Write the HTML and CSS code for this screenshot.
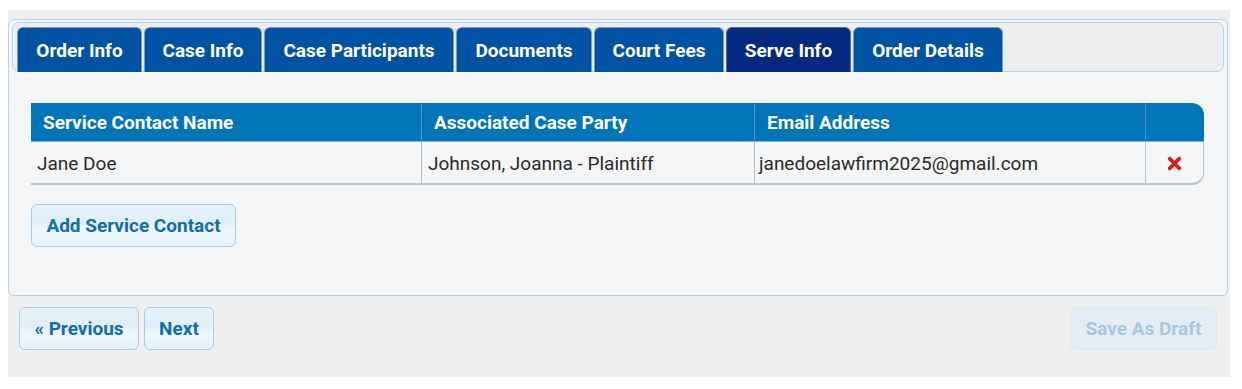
FILE: index.html
```html
<!DOCTYPE html>
<html>
<head>
<meta charset="utf-8">
<link rel="stylesheet" href="styles.css">
</head>
<body>
<div class="page">
  <div class="panel">
    <ul class="tabs">
      <li class="tab t1">Order Info</li>
      <li class="tab t2">Case Info</li>
      <li class="tab t3">Case Participants</li>
      <li class="tab t4">Documents</li>
      <li class="tab t5">Court Fees</li>
      <li class="tab t6 active">Serve Info</li>
      <li class="tab t7">Order Details</li>
    </ul>
    <div class="content">
      <table class="grid">
        <thead>
          <tr>
            <th class="c1">Service Contact Name</th>
            <th class="c2">Associated Case Party</th>
            <th class="c3">Email Address</th>
            <th class="c4"></th>
          </tr>
        </thead>
        <tbody>
          <tr>
            <td class="c1">Jane Doe</td>
            <td class="c2">Johnson, Joanna - Plaintiff</td>
            <td class="c3">janedoelawfirm2025@gmail.com</td>
            <td class="c4"><svg class="del" width="17" height="17" viewBox="0 0 16 16"><path d="M3.5 3.5 L12.5 12.5 M12.5 3.5 L3.5 12.5" stroke="#d12424" stroke-width="3.6" stroke-linecap="round"/></svg></td>
          </tr>
        </tbody>
      </table>
      <button class="btn add">Add Service Contact</button>
    </div>
  </div>
  <div class="footer">
    <div class="left">
      <button class="btn">« Previous</button>
      <button class="btn">Next</button>
    </div>
    <button class="btn disabled">Save As Draft</button>
  </div>
</div>
</body>
</html>
```
FILE: styles.css
```css
html, body { margin: 0; padding: 0; background: #fff; }
body { font-family: Roboto, "Liberation Sans", Arial, sans-serif; }
.page {
  margin: 10px 12px 0 8px;
  width: 1222px;
  height: 367px;
  background: #efefef;
  box-sizing: border-box;
  padding-top: 9px;
}
.panel {
  width: 1220px;
  height: 277px;
  box-sizing: border-box;
  background: #f4f5f7;
  border: 1px solid #b4d2ea;
  border-radius: 6px;
  padding: 2px 3px;
}
.tabs {
  list-style: none;
  margin: 0;
  height: 50px;
  box-sizing: border-box;
  background: #eeeeee;
  border: 1px solid #b4d2ea;
  border-radius: 7px;
  padding: 4px 0 0 4px;
  display: flex;
  gap: 2px;
  align-items: flex-end;
}
.tab {
  height: 45px;
  margin-bottom: -1px;
  box-sizing: border-box;
  background: #0152a3;
  border: 1px solid #6f9dcc;
  border-bottom: none;
  border-radius: 6px 6px 0 0;
  color: #fff;
  font-weight: 700;
  font-size: 19px;
  line-height: 46px;
  text-align: center;
  white-space: nowrap;
  flex: none;
}
.t1 { width: 125px; }
.t2 { width: 118px; }
.t3 { width: 190px; }
.t4 { width: 136px; }
.t5 { width: 130px; }
.t6 { width: 125px; }
.t7 { width: 150px; }
.tab.active { background: #04297f; border-color: #4a6cae; }
.content { padding: 31px 20px 0 19px; }
.grid {
  width: 1173px;
  border-collapse: separate;
  border-spacing: 0;
  font-size: 19px;
}
.grid th {
  background: #0175b8;
  color: #fff;
  font-weight: 700;
  text-align: left;
  height: 39px;
  padding: 0 12px;
  box-sizing: border-box;
  border-left: 1px solid #4e8fbf;
  border-bottom: 1px solid #8eaec6;
}
.grid th.c1 { border-left: none; }
.grid th.c4 { border-radius: 0 12px 0 0; }
.grid td {
  height: 43px;
  padding: 2px 6px 0;
  color: #2a2a2a;
  border-left: 1px solid #b3c3cf;
  border-bottom: 2px solid #b6c3cc;
  box-sizing: border-box;
}
.grid td.c1 { border-left: none; }
.grid td.c4 { border-right: 1px solid #b3c3cf; border-radius: 0 0 12px 0; text-align: center; }
.grid .c1 { width: 390px; }
.grid .c2 { width: 333px; }
.grid .c3 { width: 391px; }
.grid th.c3 { padding-left: 12px; }
.grid td.c3 { padding-left: 4px; }
.del { display: block; margin: 0 auto; }
.btn {
  font-family: Roboto, "Liberation Sans", Arial, sans-serif;
  font-size: 19px;
  font-weight: 700;
  color: #106ea8;
  height: 43px;
  padding: 0 14px;
  border: 1px solid #a9cde8;
  border-radius: 6px;
  background: linear-gradient(#e4f1fb 0%, #e1eff9 45%, #eff7fd 60%, #e3f0fa 100%);
  cursor: pointer;
}
.add { margin-top: 19px; width: 205px; padding: 0; }
.footer {
  display: flex;
  justify-content: space-between;
  padding: 11px 13px 0 11px;
}
.left { display: flex; gap: 5px; }
.left .btn { padding: 0; }
.left .btn:first-child { width: 120px; }
.left .btn:last-child { width: 70px; }
.btn.disabled {
  width: 147px;
  padding: 0;
  color: #a8c6dd;
  background: #e4edf5;
  border-color: #dde8f2;
  cursor: default;
}
```
